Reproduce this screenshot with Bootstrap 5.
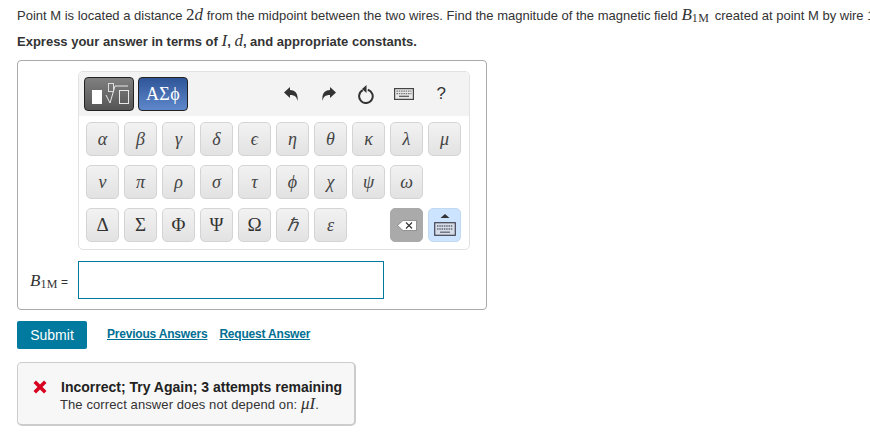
<!DOCTYPE html>
<html lang="en">
<head>
<meta charset="utf-8">
<title>Magnetic field answer</title>
<link href="https://cdn.jsdelivr.net/npm/bootstrap@5.3.0/dist/css/bootstrap.min.css" rel="stylesheet">
<style>
html,body{height:435px;overflow:hidden}
body{background:#fff;color:#333;font-family:"Liberation Sans",Arial,sans-serif;font-size:13px;line-height:16px}
.page-wrap{padding:6px 0 0 17px;width:870px;overflow:hidden}
.q-line{white-space:nowrap;height:18px;margin:0}
.q-bold{font-weight:700;font-size:13px;margin:8px 0 0;height:18px;color:#333;white-space:nowrap}
.mth{font-family:"Liberation Serif",serif;font-style:italic;font-weight:400;font-size:17px;line-height:1}
.mth-r{font-family:"Liberation Serif",serif;font-size:17px;line-height:1}
.mth-f{margin-right:2px}
.sb{font-family:"Liberation Serif",serif;font-size:12px;font-style:normal;letter-spacing:.3px;position:relative;top:2px;line-height:1}
.ans-panel{width:470px;height:250px;margin-top:10px;border:1px solid #aaa;border-radius:4px;padding:10px 16px 10px 60px}
.tbx{width:392px;height:179px;border:1px solid #e2e2e2;border-radius:5px;padding:0 2px}
.tb-top{height:44px;background:#f3f3f3;padding:5px 5px;margin:0 -2px;border-radius:5px 5px 0 0}
.mode{width:50px;height:34px;border:1px solid #222;border-radius:4px;display:flex;align-items:center;justify-content:center}
.mode-a{background:linear-gradient(#808080,#555)}
.mode-b{background:linear-gradient(#2f5597,#5f88cc);color:#fff;font-family:"Liberation Serif",serif;font-size:18px;letter-spacing:.4px;margin-left:4px}
.tools-right{margin-right:4px}
.tool{width:37.500px;text-align:center;color:#333;display:flex;justify-content:center;align-items:center}
.tool-q{font-size:17px}
.keys{display:grid;grid-template-columns:repeat(10,33px);grid-auto-rows:34px;column-gap:5px;row-gap:9px;padding:6px 0 0 5px}
.ky{border:1px solid #d4d4d4;border-radius:5px;background:linear-gradient(#f2f2f2,#e2e2e2);display:flex;align-items:center;justify-content:center;font-family:"Liberation Serif",serif;font-style:italic;font-size:18px;color:#444;padding:0}
.ky-u{font-style:normal;color:#333;font-size:19px}
.ky-bk{background:#aaa;border-color:#aaa}
.ky-kb{background:#cce4ff;border-color:#c2d9f2}
.ans-row{margin-top:11px;margin-left:-48px;height:38px}
.ans-lbl{width:48px;white-space:nowrap;font-size:12px;padding-top:2px}
.ans-in{width:306px;height:38px;border:1px solid #00799e;border-radius:0;background:#fff;padding:0 6px}
.act-row{margin-top:11px;height:28px}
.btn-sub{width:70px;height:28px;background:#007a9e;color:#fff;border:0;border-radius:2px;font-size:14px;padding:0;line-height:28px}
.btn-sub:hover{background:#007a9e;color:#fff}
.lnk{color:#006f93;font-weight:700;font-size:12px;letter-spacing:-.2px;text-decoration:underline;position:relative;top:-1px;margin-right:12px}
.lnk-first{margin-left:20px}
.fb{width:339px;height:64px;margin-top:13px;background:#f7f7f7;border:1px solid #ccc;border-bottom:2px solid #ccc;border-right:2px solid #ccc;border-radius:5px;padding:16px 0 0 15px}
.fb-t{font-weight:700;font-size:14px;color:#222;line-height:16px;white-space:nowrap}
.fb-ico{flex:0 0 14px;margin-right:14px}
.fb-s{font-size:13px;line-height:16px;margin-left:27px;white-space:nowrap;color:#333;letter-spacing:.1px}
</style>
</head>
<body>
<div class="page-wrap">
  <p class="q-line">Point M is located a distance <span class="mth-r">2</span><span class="mth">d</span> from the midpoint between the two wires. Find the magnitude of the magnetic field <span class="mth mth-f">B<span class="sb">1M</span></span> created at point M by wire 1.</p>
  <p class="q-bold">Express your answer in terms of <span class="mth">I</span>, <span class="mth">d</span>, and appropriate constants.</p>

  <div class="ans-panel">
    <div class="tbx">
      <div class="tb-top d-flex align-items-center">
        <div class="mode mode-a">
          <svg width="48" height="32" viewBox="0 0 48 32"><rect x="7" y="12" width="10" height="14" fill="#fff"/><path d="M21 17l4 8 5-17h13" fill="none" stroke="#e8e8e8" stroke-width="1"/><rect x="23.500" y="5.500" width="5" height="8" fill="none" stroke="#ddd"/><rect x="34.500" y="12.500" width="9" height="13" fill="none" stroke="#e8e8e8"/></svg>
        </div>
        <div class="mode mode-b">ΑΣϕ</div>
        <div class="d-flex ms-auto align-items-center tools-right">
          <span class="tool"><svg width="14" height="15" viewBox="0 0 14 15"><path d="M0 5.500L6 0v3c5 0 8.500 3.500 7.500 11-.8-4-2.500-6-7.500-6v3z" fill="#333"/></svg></span>
          <span class="tool"><svg width="14" height="15" viewBox="0 0 14 15"><path d="M14 5.500L8 0v3C3 3-.5 6.500.5 14 1.300 10 3 8 8 8v3z" fill="#333"/></svg></span>
          <span class="tool"><svg width="18" height="19" viewBox="0 0 18 19"><path d="M10.800 4.700a6.800 6.800 0 1 1-5 .5" fill="none" stroke="#333" stroke-width="2"/><path d="M9.500 0v8l-4.500-4z" fill="#333"/></svg></span>
          <span class="tool"><svg width="20" height="12" viewBox="0 0 20 12"><rect x=".6" y=".6" width="18.800" height="10.800" fill="#e8e8e8" stroke="#444" stroke-width="1.200"/><path d="M2.500 3.200h15M2.500 5.600h15" stroke="#777" stroke-width="1.200" stroke-dasharray="1.500 .8"/><path d="M5 8.300h10" stroke="#555" stroke-width="1.200"/></svg></span>
          <span class="tool tool-q">?</span>
        </div>
      </div>
      <div class="keys">
        <button class="ky">α</button><button class="ky">β</button><button class="ky">γ</button><button class="ky">δ</button><button class="ky">ϵ</button><button class="ky">η</button><button class="ky">θ</button><button class="ky">κ</button><button class="ky">λ</button><button class="ky">μ</button>
        <button class="ky">ν</button><button class="ky">π</button><button class="ky">ρ</button><button class="ky">σ</button><button class="ky">τ</button><button class="ky">ϕ</button><button class="ky">χ</button><button class="ky">ψ</button><button class="ky">ω</button><span></span>
        <button class="ky ky-u">Δ</button><button class="ky ky-u">Σ</button><button class="ky ky-u">Φ</button><button class="ky ky-u">Ψ</button><button class="ky ky-u">Ω</button><button class="ky">ℏ</button><button class="ky">ε</button><span></span>
        <button class="ky ky-bk" aria-label="Backspace"><svg width="20" height="11" viewBox="0 0 20 11"><path d="M6 .5h13.500v10H6L.5 5.500z" fill="#fff" stroke="#777" stroke-width=".7"/><path d="M9 2.500l6 6m0-6l-6 6" stroke="#333" stroke-width="1.100"/></svg></button>
        <button class="ky ky-kb" aria-label="Keyboard"><svg width="22" height="24" viewBox="0 0 22 24"><path d="M11 1l4.500 4h-9z" fill="#333"/><rect x=".7" y="9.700" width="20.600" height="12.600" fill="#d5dde6" stroke="#445" stroke-width="1.200"/><path d="M3 13h16M3 16h16" stroke="#667" stroke-width="1.300" stroke-dasharray="1.500 .8"/><path d="M6 19.200h10" stroke="#667" stroke-width="1.300"/></svg></button>
      </div>
    </div>
    <div class="ans-row d-flex align-items-center">
      <label class="ans-lbl" for="ans"><span class="mth">B<span class="sb">1M</span></span> =</label>
      <input class="ans-in" id="ans" type="text" aria-label="Answer">
    </div>
  </div>

  <div class="act-row d-flex align-items-center">
    <button class="btn btn-sub">Submit</button>
    <a class="lnk lnk-first" href="#">Previous Answers</a>
    <a class="lnk" href="#">Request Answer</a>
  </div>

  <div class="fb">
    <div class="fb-t d-flex align-items-center"><svg class="fb-ico" width="14" height="14" viewBox="0 0 14 14"><path d="M.5 3L3 .5l4 4 4-4L13.500 3l-4 4 4 4-2.500 2.500-4-4-4 4L.5 11l4-4z" fill="#d8001f"/></svg>Incorrect; Try Again; 3 attempts remaining</div>
    <div class="fb-s">The correct answer does not depend on: <span class="mth">μI</span>.</div>
  </div>
</div>
<script src="https://cdn.jsdelivr.net/npm/bootstrap@5.3.0/dist/js/bootstrap.bundle.min.js"></script>
</body>
</html>
